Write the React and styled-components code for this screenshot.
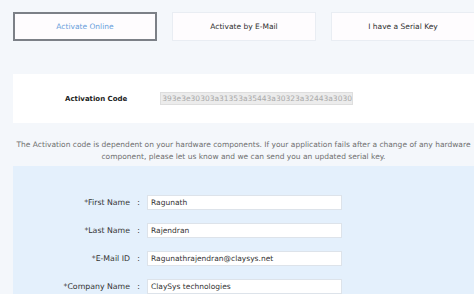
import styled, { createGlobalStyle } from "styled-components";

const GlobalStyle = createGlobalStyle`
  html, body {
    margin: 0;
    padding: 0;
    background: #f4f7fb;
    font-family: "DejaVu Sans", Verdana, sans-serif;
    overflow: hidden;
  }
`;

const Page = styled.div`
  width: 474px;
  height: 294px;
  padding: 12px 0 0 13px;
  box-sizing: border-box;
  overflow: hidden;
  background: #f4f7fb;
`;

const Tabs = styled.div`
  display: flex;
  gap: 15px;
`;

const Tab = styled.div`
  flex: none;
  width: 144px;
  height: 29px;
  box-sizing: border-box;
  display: flex;
  align-items: center;
  justify-content: center;
  font-size: 7.5px;
  background: #fefcfe;
  color: ${(p) => (p.$active ? "#6a9fdc" : "#2e2e2e")};
  border: ${(p) => (p.$active ? "2px solid #7c8087" : "1px solid #e9edf3")};
`;

const CodePanel = styled.div`
  margin-top: 33px;
  height: 49px;
  background: #ffffff;
  display: flex;
  align-items: center;
  padding-left: 52px;
  gap: 33px;
`;

const CodeLabel = styled.span`
  font-size: 7px;
  font-weight: bold;
  color: #222;
`;

const CodeField = styled.div`
  width: 193px;
  height: 13px;
  box-sizing: border-box;
  background: #ececec;
  border: 1px solid #dedede;
  color: #a9a9a9;
  font-size: 7.5px;
  line-height: 11px;
  padding-left: 1px;
  white-space: nowrap;
  overflow: hidden;
`;

const Note = styled.p`
  margin: 16px 0 0 0;
  width: 461px;
  text-align: center;
  font-size: 7.5px;
  line-height: 12px;
  color: #6f6f6f;
`;

const FormPanel = styled.div`
  margin-top: 3px;
  height: 140px;
  background: #e4f0fc;
  padding-top: 29px;
  box-sizing: border-box;
  display: flex;
  flex-direction: column;
  gap: 13px;
`;

const Row = styled.div`
  display: flex;
  align-items: center;
  height: 15px;
`;

const Label = styled.span`
  width: 117px;
  text-align: right;
  font-size: 7.8px;
  color: #333;
`;

const Colon = styled.span`
  width: 17px;
  text-align: center;
  font-size: 7.8px;
  color: #333;
`;

const Input = styled.div`
  width: 195px;
  height: 15px;
  box-sizing: border-box;
  background: #fff;
  border: 1px solid #dde3ea;
  padding-left: 3px;
  font-size: 7.5px;
  line-height: 13px;
  color: #333;
`;

const fields = [
  ["*First Name", "Ragunath"],
  ["*Last Name", "Rajendran"],
  ["*E-Mail ID", "Ragunathrajendran@claysys.net"],
  ["*Company Name", "ClaySys technologies"],
];

export default function App() {
  return (
    <Page>
      <GlobalStyle />
      <Tabs>
        <Tab $active>Activate Online</Tab>
        <Tab>Activate by E-Mail</Tab>
        <Tab>I have a Serial Key</Tab>
      </Tabs>
      <CodePanel>
        <CodeLabel>Activation Code</CodeLabel>
        <CodeField>393e3e30303a31353a35443a30323a32443a3030</CodeField>
      </CodePanel>
      <Note>
        The Activation code is dependent on your hardware components. If your
        application fails after a change of any hardware component, please let
        us know and we can send you an updated serial key.
      </Note>
      <FormPanel>
        {fields.map(([label, value]) => (
          <Row key={label}>
            <Label>{label}</Label>
            <Colon>:</Colon>
            <Input>{value}</Input>
          </Row>
        ))}
      </FormPanel>
    </Page>
  );
}
